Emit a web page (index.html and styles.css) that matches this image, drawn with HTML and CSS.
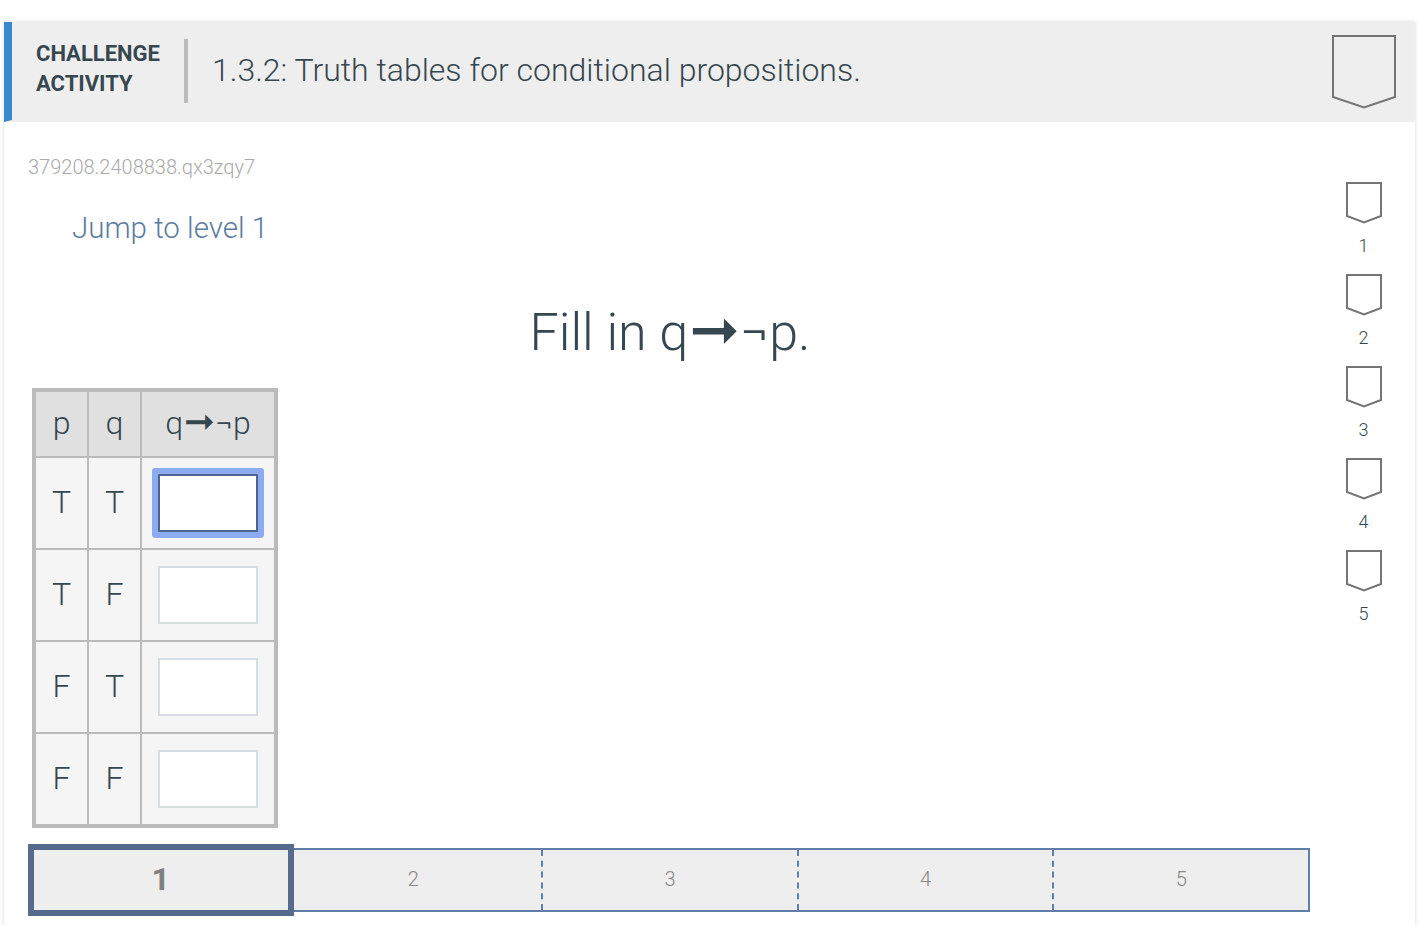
FILE: index.html

```html
<!DOCTYPE html>
<html lang="en">
<head>
  <meta charset="UTF-8">
  <title>1.3.2: Truth tables for conditional propositions.</title>
  <meta name="viewport" content="width=device-width, initial-scale=1.0">
  <link rel="stylesheet" href="styles.css">
</head>
<body>
  <div class="card">

    <!-- Header -->
    <div class="header">
      <div class="header-label">CHALLENGE<br>ACTIVITY</div>
      <div class="header-title"><span class="header-text">1.3.2: Truth tables for conditional propositions.</span></div>
      <svg class="header-badge" viewBox="0 0 64 74">
        <path d="M1 1H63V62L32 72.500L1 62Z"/>
      </svg>
    </div>

    <div class="content">
      <div class="main">
        <div class="code">379208.2408838.qx3zqy7</div>
        <div class="jump">Jump to level 1</div>
        <div class="prompt">Fill in q<span class="arrow">➞</span>¬p.</div>

        <table class="truth">
          <tr>
            <th class="col-p">p</th>
            <th class="col-q">q</th>
            <th class="col-r">q<span class="arrow">➞</span>¬p</th>
          </tr>
          <tr>
            <td>T</td>
            <td>T</td>
            <td><div class="answer focused"></div></td>
          </tr>
          <tr>
            <td>T</td>
            <td>F</td>
            <td><div class="answer"></div></td>
          </tr>
          <tr>
            <td>F</td>
            <td>T</td>
            <td><div class="answer"></div></td>
          </tr>
          <tr>
            <td>F</td>
            <td>F</td>
            <td><div class="answer"></div></td>
          </tr>
        </table>

        <div class="levels">
          <div class="level active">1</div>
          <div class="level">2</div>
          <div class="level">3</div>
          <div class="level">4</div>
          <div class="level">5</div>
        </div>
      </div>

      <!-- Level badges -->
      <div class="side">
        <div class="side-item">
          <svg class="side-badge" viewBox="0 0 36 42"><path d="M1 1H35V34L18 40.500L1 34Z"/></svg>
          <div class="side-num">1</div>
        </div>
        <div class="side-item">
          <svg class="side-badge" viewBox="0 0 36 42"><path d="M1 1H35V34L18 40.500L1 34Z"/></svg>
          <div class="side-num">2</div>
        </div>
        <div class="side-item">
          <svg class="side-badge" viewBox="0 0 36 42"><path d="M1 1H35V34L18 40.500L1 34Z"/></svg>
          <div class="side-num">3</div>
        </div>
        <div class="side-item">
          <svg class="side-badge" viewBox="0 0 36 42"><path d="M1 1H35V34L18 40.500L1 34Z"/></svg>
          <div class="side-num">4</div>
        </div>
        <div class="side-item">
          <svg class="side-badge" viewBox="0 0 36 42"><path d="M1 1H35V34L18 40.500L1 34Z"/></svg>
          <div class="side-num">5</div>
        </div>
      </div>
    </div>
  </div>
</body>
</html>
```

FILE: styles.css

```css
html, body {
  height: 100%;
}

body {
  margin: 0;
  padding: 22px 9px 0 4px;
  box-sizing: border-box;
  overflow: hidden;
  background: #fff;
  font-family: Roboto, sans-serif;
  color: #37474f;
}

.card {
  height: 904px;
  overflow: hidden;
  padding: 0 0 4px;
  box-sizing: border-box;
  background: #fff;
  box-shadow: 0 0 4px rgba(0, 0, 0, 0.16);
}

.header {
  display: flex;
  align-items: center;
  box-sizing: border-box;
  height: 100px;
  background: #eee;
  border-left: 8px solid #3b87cc;
  border-bottom: 2px solid #eee;
}

.header-label {
  margin: -4px 0 0 24px;
  width: 148px;
  font-size: 22px;
  font-weight: 700;
  line-height: 30px;
}

.header-title {
  flex: 1;
  display: flex;
  align-items: center;
  height: 64px;
  padding-left: 24px;
  border-left: 4px solid #bbb;
  font-size: 32px;
  font-weight: 300;
}

.header-text {
  margin-top: -2px;
}

.header-badge {
  width: 64px;
  height: 74px;
  margin: 2px 19px 0 0;
  fill: none;
  stroke: #757575;
  stroke-width: 2;
}

.content {
  display: flex;
}

.main {
  width: 1308px;
  flex-shrink: 0;
  box-sizing: border-box;
  padding-left: 24px;
}

.code {
  margin-top: 33px;
  font-size: 20px;
  font-weight: 300;
  line-height: 24px;
  color: #aaa;
}

.jump {
  margin: 31px 0 0 44px;
  font-size: 29.5px;
  font-weight: 300;
  line-height: 36px;
  color: #5b7ba0;
}

.prompt {
  margin-top: 55px;
  font-size: 52px;
  font-weight: 300;
  line-height: 64px;
  text-align: center;
}

.arrow {
  margin: 0 0.02em;
  font-family: "DejaVu Sans", sans-serif;
  font-size: 1.15em;
  font-weight: 400;
  line-height: 0;
}

.truth {
  margin: 23px 0 0 4px;
  border-collapse: separate;
  border-spacing: 0;
  border: 4px solid #bbb;
  font-size: 32px;
  font-weight: 300;
  line-height: 40px;
  text-align: center;
}

.truth th, .truth td {
  padding: 0 0 2px;
  border-right: 2px solid #bbb;
  border-bottom: 2px solid #bbb;
  font-weight: 300;
}

.truth th:last-child, .truth td:last-child {
  border-right: none;
}

.truth tr:last-child td {
  border-bottom: none;
}

.truth th {
  height: 62px;
  background: #e0e0e0;
}

.truth td {
  height: 88px;
  background: #f5f5f5;
}

.col-p, .col-q {
  width: 51px;
}

.col-r {
  width: 132px;
}

.answer {
  box-sizing: border-box;
  width: 100px;
  height: 58px;
  margin: 2px auto 0;
  background: #fff;
  border: 2px solid #d5dde0;
}

.answer.focused {
  border-color: #4d6490;
  box-shadow: 0 0 0 6px #8cacef;
  border-radius: 1px;
}

.levels {
  display: grid;
  grid-template-columns: repeat(5, 1fr);
  width: 1282px;
  height: 64px;
  box-sizing: border-box;
  margin-top: 20px;
  background: #eee;
  border: 2px solid #5f7fa6;
}

.level {
  display: flex;
  align-items: center;
  justify-content: center;
  padding-bottom: 2px;
  font-size: 20px;
  font-weight: 300;
  color: #888;
  border-left: 2px dashed #5f7fa6;
}

.level.active {
  position: relative;
  margin: -6px -8px -6px -2px;
  border: 6px solid #566a8c;
  background: #eee;
  font-size: 32px;
  font-weight: 700;
  color: #808080;
}

.level.active + .level {
  border-left: none;
}

.side {
  flex: 1;
  padding-top: 60px;
}

.side-item {
  display: flex;
  flex-direction: column;
  align-items: center;
  height: 92px;
}

.side-badge {
  width: 36px;
  height: 42px;
  fill: none;
  stroke: #757575;
  stroke-width: 2;
}

.side-num {
  margin-top: 10px;
  font-size: 18px;
  font-weight: 300;
  line-height: 24px;
}
```
